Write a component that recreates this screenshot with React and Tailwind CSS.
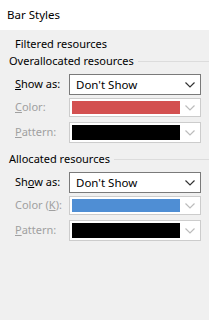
import React from "react";

const Chevron = ({ disabled }) => (
  <svg width="10" height="6" viewBox="0 0 10 6" className="shrink-0">
    <path d="M0.5 0.5 L5 5 L9.5 0.5" fill="none" stroke={disabled ? "#bcbcbc" : "#333"} strokeWidth="1.2" />
  </svg>
);

const ShowAs = () => (
  <div className="w-[132px] h-[21px] border border-[#7a7a7a] bg-white flex items-center pl-[6px] pr-[5px]">
    <span className="flex-1 text-[11.5px] text-[#000]">Don't Show</span>
    <Chevron />
  </div>
);

const Swatch = ({ color, h }) => (
  <div className={`w-[132px] ${h} border border-[#cccccc] bg-white flex items-center pl-[2px] pr-[5px] py-[2px]`}>
    <div className="w-[108px] h-full" style={{ background: color }} />
    <div className="flex-1 flex justify-end">
      <Chevron disabled />
    </div>
  </div>
);

const Row = ({ label, children, disabled, mt }) => (
  <div className={`flex items-center ${mt}`}>
    <div className={`w-[69px] shrink-0 pl-[15px] text-[11px] whitespace-nowrap ${disabled ? "text-[#a0a0a0]" : "text-black"}`}>
      {label}
    </div>
    {children}
  </div>
);

const Header = ({ text, mt }) => (
  <div className={`flex items-center pl-[9px] h-[16px] ${mt}`}>
    <span className="text-[11px] text-black whitespace-nowrap">{text}</span>
    <div className="flex-1 h-px bg-[#dcdcdc] ml-[4px] mt-[1px]" />
  </div>
);

export default function App() {
  return (
    <div
      className="w-[209px] h-[320px] flex flex-col overflow-hidden"
      style={{ fontFamily: '"Segoe UI", "Noto Sans", sans-serif' }}
    >
      <div className="h-[30px] bg-white flex items-center pl-[7px] text-[11.5px] text-black shrink-0">
        Bar Styles
      </div>
      <div className="flex-1 bg-[#f0f0f0] flex flex-col">
        <div className="pl-[15px] mt-[6px] h-[16px] leading-[16px] text-[11px] text-black">Filtered resources</div>
        <Header text="Overallocated resources" mt="mt-[1px]" />
        <Row label={<><u>S</u>how as:</>} mt="mt-[5px]">
          <ShowAs />
        </Row>
        <Row label={<><u>C</u>olor:</>} disabled mt="mt-[3px]">
          <Swatch color="#d35050" h="h-[19px]" />
        </Row>
        <Row label={<><u>P</u>attern:</>} disabled mt="mt-[5px]">
          <Swatch color="#000000" h="h-[21px]" />
        </Row>
        <Header text="Allocated resources" mt="mt-[8px]" />
        <Row label={<>Sh<u>o</u>w as:</>} mt="mt-[5px]">
          <ShowAs />
        </Row>
        <Row label={<>Color (<u>K</u>):</>} disabled mt="mt-[3px]">
          <Swatch color="#4f8ed4" h="h-[19px]" />
        </Row>
        <Row label={<><u>P</u>attern:</>} disabled mt="mt-[5px]">
          <Swatch color="#000000" h="h-[21px]" />
        </Row>
      </div>
    </div>
  );
}
